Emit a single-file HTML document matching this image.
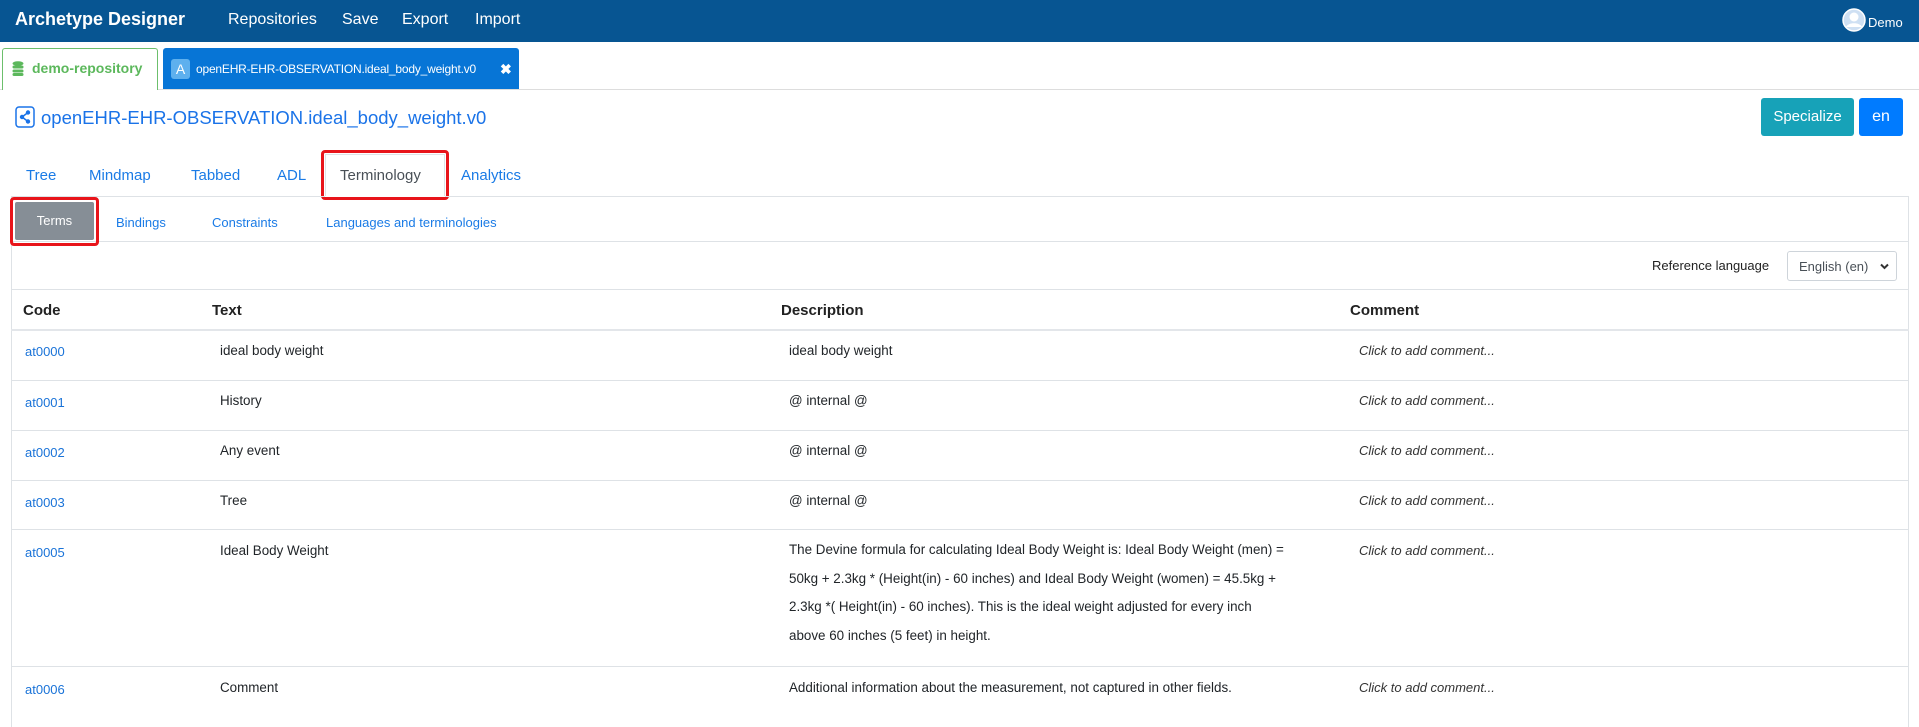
<!DOCTYPE html>
<html><head><meta charset="utf-8"><style>
*{box-sizing:border-box;margin:0;padding:0}
body{width:1919px;height:727px;overflow:hidden;background:#fff;font-family:"Liberation Sans",sans-serif;color:#212529;position:relative}
.abs{position:absolute;white-space:nowrap}
.nav{position:absolute;left:0;top:0;width:1919px;height:42px;background:#075592}
.tab{font-size:15px;top:167px;color:#1a7be6}
.sub{font-size:13px;top:215px;color:#1a7be6}
.hl{position:absolute;left:11px;width:1898px;height:1px;background:#dee2e6}
.th{font-size:15px;font-weight:bold;color:#222;top:302px}
.c{font-size:13px}
.d{font-size:13.4px}
.cc{color:#1a73d8}
.ci{font-style:italic;color:#333}
</style></head><body>
<div class="nav"></div>
<div class="abs" style="left:15px;top:9px;color:#fff;font-weight:bold;font-size:18px">Archetype Designer</div>
<div class="abs" style="left:228px;top:11px;color:#fff;font-size:16px">Repositories</div>
<div class="abs" style="left:342px;top:11px;color:#fff;font-size:16px">Save</div>
<div class="abs" style="left:402px;top:11px;color:#fff;font-size:16px">Export</div>
<div class="abs" style="left:475px;top:11px;color:#fff;font-size:16px">Import</div>
<svg class="abs" style="left:1842px;top:7px" width="24" height="26" viewBox="0 0 24 26"><circle cx="12" cy="13" r="11" fill="#cfe0f3" stroke="#fff" stroke-width="1.5"/><circle cx="12" cy="10" r="4.5" fill="#fff"/><path d="M4 20c2-5 14-5 16 0" fill="#fff"/></svg>
<div class="abs" style="left:1868px;top:15px;color:#fff;font-size:13px">Demo</div>

<div class="abs" style="left:0;top:89px;width:1919px;height:1px;background:#ddd"></div>
<div class="abs" style="left:2px;top:48px;width:156px;height:42px;border:1px solid #6cbf6c;border-bottom:none;border-radius:3px 3px 0 0;background:#fff"></div>
<svg class="abs" style="left:12px;top:61px" width="12" height="15" viewBox="0 0 12 15"><g fill="#5cb85c"><ellipse cx="6" cy="2.5" rx="5.5" ry="2.3"/><rect x="0.5" y="4.5" width="11" height="3" rx="1.5"/><rect x="0.5" y="8.5" width="11" height="3" rx="1.5"/><rect x="0.5" y="12" width="11" height="3" rx="1.5"/></g></svg>
<div class="abs" style="left:32px;top:60px;color:#5cb85c;font-weight:bold;font-size:14px">demo-repository</div>
<div class="abs" style="left:163px;top:48px;width:356px;height:41px;background:#0775d6;border-radius:3px 3px 0 0"></div>
<div class="abs" style="left:171px;top:59px;width:19px;height:20px;background:#5eb0ee;border-radius:3px;color:#fff;font-size:14px;text-align:center;line-height:20px">A</div>
<div class="abs" style="left:196px;top:62px;color:#fff;font-size:12px;letter-spacing:-0.2px">openEHR-EHR-OBSERVATION.ideal_body_weight.v0</div>
<div class="abs" style="left:500px;top:61px;color:#fff;font-size:14px;font-weight:bold">✖</div>

<svg class="abs" style="left:15px;top:106px" width="20" height="22" viewBox="0 0 20 22"><rect x="1" y="1" width="18" height="20" rx="3" fill="#fff" stroke="#1a73e8" stroke-width="1.5"/><g fill="#1a73e8"><circle cx="13" cy="6.5" r="2.2"/><circle cx="13" cy="15.5" r="2.2"/><circle cx="7" cy="11" r="2.2"/></g><path d="M13 6.5L7 11L13 15.5" stroke="#1a73e8" stroke-width="1.5" fill="none"/></svg>
<div class="abs" style="left:41px;top:107px;font-size:18.5px;color:#1a73e8">openEHR-EHR-OBSERVATION.ideal_body_weight.v0</div>
<div class="abs" style="left:1761px;top:98px;width:93px;height:38px;background:#17a2b8;border-radius:3px;color:#fff;font-size:15px;text-align:center;line-height:38px">Specialize</div>
<div class="abs" style="left:1859px;top:98px;width:44px;height:38px;background:#007bff;border-radius:3px;color:#fff;font-size:16px;text-align:center;line-height:38px">en</div>

<div class="abs tab" style="left:26px">Tree</div>
<div class="abs tab" style="left:89px">Mindmap</div>
<div class="abs tab" style="left:191px">Tabbed</div>
<div class="abs tab" style="left:277px">ADL</div>
<div class="abs" style="left:321px;top:150px;width:128px;height:50px;border:3px solid #e8141a;border-radius:4px"></div>
<div class="abs" style="left:325px;top:154px;width:120px;height:43px;border:1px solid #dee2e6;border-bottom:none;background:#fff"></div>
<div class="abs tab" style="left:340px;color:#495057">Terminology</div>
<div class="abs tab" style="left:461px">Analytics</div>

<div class="abs" style="left:11px;top:196px;width:1898px;height:531px;border:1px solid #dee2e6;border-bottom:none"></div>
<div class="abs" style="left:325px;top:196px;width:120px;height:1px;background:#fff"></div>
<div class="hl" style="top:241px"></div>
<div class="abs" style="left:10px;top:197px;width:89px;height:49px;border:3px solid #e8141a;border-radius:4px"></div>
<div class="abs" style="left:15px;top:202px;width:79px;height:38px;background:#868e96;border-radius:2px;color:#fff;font-size:13px;text-align:center;line-height:38px">Terms</div>
<div class="abs sub" style="left:116px">Bindings</div>
<div class="abs sub" style="left:212px">Constraints</div>
<div class="abs sub" style="left:326px">Languages and terminologies</div>

<div class="abs" style="left:1652px;top:258px;font-size:13px;color:#222">Reference language</div>
<div class="abs" style="left:1787px;top:251px;width:110px;height:30px;border:1px solid #ced4da;border-radius:3px;font-size:13px;color:#495057;padding:7px 0 0 11px">English (en)<svg style="position:absolute;right:7px;top:11px" width="9" height="7" viewBox="0 0 9 7"><path d="M1 1.5L4.5 5L8 1.5" stroke="#333" stroke-width="2" fill="none"/></svg></div>
<div class="hl" style="top:289px"></div>

<div class="abs th" style="left:23px">Code</div>
<div class="abs th" style="left:212px">Text</div>
<div class="abs th" style="left:781px">Description</div>
<div class="abs th" style="left:1350px">Comment</div>
<div class="hl" style="top:329px;height:2px;background:#e3e6ea"></div>

<div class="abs c cc" style="left:25px;top:344px">at0000</div><div class="abs d" style="left:220px;top:343px">ideal body weight</div><div class="abs d" style="left:789px;top:343px">ideal body weight</div><div class="abs c ci" style="left:1359px;top:343px">Click to add comment...</div>
<div class="hl" style="top:380px"></div>
<div class="abs c cc" style="left:25px;top:395px">at0001</div><div class="abs d" style="left:220px;top:393px">History</div><div class="abs d" style="left:789px;top:393px">@ internal @</div><div class="abs c ci" style="left:1359px;top:393px">Click to add comment...</div>
<div class="hl" style="top:430px"></div>
<div class="abs c cc" style="left:25px;top:445px">at0002</div><div class="abs d" style="left:220px;top:443px">Any event</div><div class="abs d" style="left:789px;top:443px">@ internal @</div><div class="abs c ci" style="left:1359px;top:443px">Click to add comment...</div>
<div class="hl" style="top:480px"></div>
<div class="abs c cc" style="left:25px;top:495px">at0003</div><div class="abs d" style="left:220px;top:493px">Tree</div><div class="abs d" style="left:789px;top:493px">@ internal @</div><div class="abs c ci" style="left:1359px;top:493px">Click to add comment...</div>
<div class="hl" style="top:529px"></div>
<div class="abs c cc" style="left:25px;top:545px">at0005</div><div class="abs d" style="left:220px;top:543px">Ideal Body Weight</div>
<div class="abs d" style="left:789px;top:536px;line-height:28.7px">The Devine formula for calculating Ideal Body Weight is: Ideal Body Weight (men) =<br>50kg + 2.3kg * (Height(in) - 60 inches) and Ideal Body Weight (women) = 45.5kg +<br>2.3kg *( Height(in) - 60 inches). This is the ideal weight adjusted for every inch<br>above 60 inches (5 feet) in height.</div>
<div class="abs c ci" style="left:1359px;top:543px">Click to add comment...</div>
<div class="hl" style="top:666px"></div>
<div class="abs c cc" style="left:25px;top:682px">at0006</div><div class="abs d" style="left:220px;top:680px">Comment</div><div class="abs d" style="left:789px;top:680px">Additional information about the measurement, not captured in other fields.</div><div class="abs c ci" style="left:1359px;top:680px">Click to add comment...</div>
</body></html>
